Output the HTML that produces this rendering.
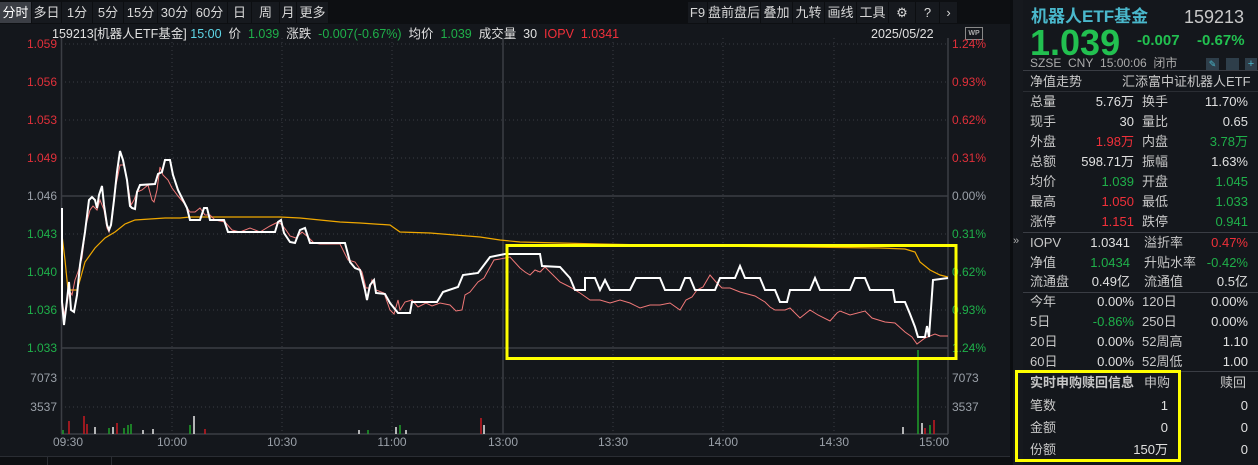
<!DOCTYPE html><html><head><meta charset="utf-8"><style>
*{margin:0;padding:0;box-sizing:border-box}
body{width:1258px;height:465px;background:#14171c;overflow:hidden;font-family:"Liberation Sans","Noto Sans CJK SC",sans-serif;color:#c8c8c8;position:relative;font-size:13px}
.a{position:absolute;white-space:nowrap}
.tb{position:absolute;top:2px;height:21px;line-height:21px;text-align:center;font-size:13px;white-space:nowrap;color:#d8d8d8;border-right:1px solid #0c0e11;background:#16191e}
.g{color:#1fb04a}.r{color:#f0303a}.w{color:#e0e0e0}.gr{color:#c8c8c8}
.rp .a{font-size:13px;line-height:18px;height:18px}
</style></head><body>
<div class="a" style="left:0;top:0;width:1010px;height:24px;background:#0d0f12"></div>
<div class="tb" style="left:0;width:32px;background:#3b3e45;color:#fff">分时</div>
<div class="tb" style="left:32px;width:30px">多日</div>
<div class="tb" style="left:62px;width:31px">1分</div>
<div class="tb" style="left:93px;width:31px">5分</div>
<div class="tb" style="left:124px;width:34px">15分</div>
<div class="tb" style="left:158px;width:34px">30分</div>
<div class="tb" style="left:192px;width:36px">60分</div>
<div class="tb" style="left:228px;width:24px">日</div>
<div class="tb" style="left:252px;width:28px">周</div>
<div class="tb" style="left:280px;width:17px">月</div>
<div class="tb" style="left:297px;width:32px">更多</div>
<div class="tb" style="left:688px;width:20px">F9</div>
<div class="tb" style="left:708px;width:53px">盘前盘后</div>
<div class="tb" style="left:761px;width:32px">叠加</div>
<div class="tb" style="left:793px;width:32px">九转</div>
<div class="tb" style="left:825px;width:32px">画线</div>
<div class="tb" style="left:857px;width:32px">工具</div>
<div class="tb" style="left:889px;width:27px">⚙</div>
<div class="tb" style="left:916px;width:24px">?</div>
<div class="tb" style="left:940px;width:18px">›</div>
<div class="a" style="left:52px;top:26px;font-size:12.5px;line-height:16px"><span class="w">159213[机器人ETF基金]</span> <span style="color:#5fd8e8">15:00</span>&nbsp; <span class="w">价</span>&nbsp; <span class="g">1.039</span>&nbsp; <span class="w">涨跌</span>&nbsp; <span class="g">-0.007(-0.67%)</span>&nbsp; <span class="w">均价</span>&nbsp; <span class="g">1.039</span>&nbsp; <span class="w">成交量</span>&nbsp; <span class="w">30</span>&nbsp; <span class="r">IOPV</span>&nbsp; <span class="r">1.0341</span></div>
<div class="a w" style="left:871px;top:26px;font-size:12.5px;line-height:16px">2025/05/22</div>
<div class="a" style="left:965px;top:27px;width:18px;height:13px;border:1px solid #888;font-size:7px;color:#aaa;text-align:center;line-height:11px;font-weight:bold">WP</div>
<svg class="a" style="left:0;top:0" width="1010" height="465">
<g stroke="#3a3d44" stroke-dasharray="1,3" stroke-width="1">
<line x1="61" x2="948" y1="44" y2="44"/><line x1="61" x2="948" y1="82" y2="82"/><line x1="61" x2="948" y1="120" y2="120"/><line x1="61" x2="948" y1="158" y2="158"/><line x1="61" x2="948" y1="234" y2="234"/><line x1="61" x2="948" y1="272" y2="272"/><line x1="61" x2="948" y1="310" y2="310"/><line x1="61" x2="948" y1="378" y2="378"/><line x1="61" x2="948" y1="407" y2="407"/>
<line x1="172" x2="172" y1="38" y2="434"/><line x1="282" x2="282" y1="38" y2="434"/><line x1="392" x2="392" y1="38" y2="434"/><line x1="613" x2="613" y1="38" y2="434"/><line x1="723" x2="723" y1="38" y2="434"/><line x1="834" x2="834" y1="38" y2="434"/>
</g>
<g stroke="#3b3e44" stroke-width="1.5"><line x1="61" x2="948" y1="196" y2="196"/><line x1="61" x2="948" y1="348" y2="348"/><line x1="61" x2="948" y1="434" y2="434"/>
<line x1="61.5" x2="61.5" y1="38" y2="434"/><line x1="503" x2="503" y1="38" y2="434"/><line x1="948" x2="948" y1="38" y2="434"/></g>
<g font-size="12" text-anchor="end">
<text x="57" y="48" fill="#e0303a">1.059</text><text x="57" y="86" fill="#e0303a">1.056</text><text x="57" y="124" fill="#e0303a">1.053</text><text x="57" y="162" fill="#e0303a">1.049</text><text x="57" y="200" fill="#9aa0a8">1.046</text><text x="57" y="238" fill="#1fb04a">1.043</text><text x="57" y="276" fill="#1fb04a">1.040</text><text x="57" y="314" fill="#1fb04a">1.036</text><text x="57" y="352" fill="#1fb04a">1.033</text><text x="57" y="382" fill="#9aa0a8">7073</text><text x="57" y="411" fill="#9aa0a8">3537</text>
</g>
<g font-size="12">
<text x="952" y="48" fill="#e0303a">1.24%</text><text x="952" y="86" fill="#e0303a">0.93%</text><text x="952" y="124" fill="#e0303a">0.62%</text><text x="952" y="162" fill="#e0303a">0.31%</text><text x="952" y="200" fill="#9aa0a8">0.00%</text><text x="952" y="238" fill="#1fb04a">0.31%</text><text x="952" y="276" fill="#1fb04a">0.62%</text><text x="952" y="314" fill="#1fb04a">0.93%</text><text x="952" y="352" fill="#1fb04a">1.24%</text><text x="952" y="382" fill="#9aa0a8">7073</text><text x="952" y="411" fill="#9aa0a8">3537</text>
</g>
<g font-size="12" fill="#9aa0a8" text-anchor="middle"><text x="68" y="446">09:30</text><text x="172" y="446">10:00</text><text x="282" y="446">10:30</text><text x="392" y="446">11:00</text><text x="503" y="446">13:00</text><text x="613" y="446">13:30</text><text x="723" y="446">14:00</text><text x="834" y="446">14:30</text><text x="934" y="446">15:00</text></g>
<g stroke-width="1.5">
<g stroke="#c81a22"><line x1="69" x2="69" y1="421" y2="434"/><line x1="84" x2="84" y1="416" y2="434"/><line x1="87" x2="87" y1="424" y2="434"/><line x1="117" x2="117" y1="423" y2="434"/><line x1="205" x2="205" y1="429" y2="434"/><line x1="481" x2="481" y1="418" y2="434"/><line x1="925" x2="925" y1="428" y2="434"/><line x1="934" x2="934" y1="420" y2="434"/></g>
<g stroke="#1fa02a"><line x1="63" x2="63" y1="430" y2="434"/><line x1="109" x2="109" y1="428" y2="434"/><line x1="124" x2="124" y1="428" y2="434"/><line x1="128" x2="128" y1="425" y2="434"/><line x1="131" x2="131" y1="424" y2="434"/><line x1="190" x2="190" y1="425" y2="434"/><line x1="400" x2="400" y1="425" y2="434"/><line x1="368" x2="368" y1="430" y2="434"/><line x1="918" x2="918" y1="350" y2="434"/><line x1="930" x2="930" y1="425" y2="434"/></g>
<g stroke="#e8e8e8"><line x1="95" x2="95" y1="427" y2="434"/><line x1="113" x2="113" y1="427" y2="434"/><line x1="143" x2="143" y1="430" y2="434"/><line x1="153" x2="153" y1="429" y2="434"/><line x1="194" x2="194" y1="416" y2="434"/><line x1="359" x2="359" y1="430" y2="434"/><line x1="396" x2="396" y1="427" y2="434"/><line x1="406" x2="406" y1="430" y2="434"/><line x1="484" x2="484" y1="425" y2="434"/><line x1="922" x2="922" y1="423" y2="434"/><line x1="903" x2="903" y1="427" y2="434"/></g>
</g>
<polyline fill="none" stroke="#f0a800" stroke-width="1.2" points="62,235 65,260 68,290 77,290 80,280 85,262 95,248 105,238 115,232 125,224 135,220 150,219 165,218 180,218 190,217 280,217 300,218 320,220 340,222 360,223 390,225 400,232 430,233 480,237 500,240 520,242 600,244 650,245 700,246 800,247 880,248 905,249 915,252 920,262 930,270 940,275 948,277"/>
<polyline fill="none" stroke="#f07878" stroke-width="1" points="62,300 65,318 67,305 69,290 72,295 75,280 78,272 82,258 86,225 90,210 93,206 97,210 100,200 104,210 107,228 109,232 112,220 116,185 120,165 124,165 128,185 131,205 134,200 137,192 142,190 148,185 152,200 154,202 157,190 160,167 163,175 168,180 172,188 178,196 184,203 190,212 195,212 200,208 205,215 210,215 215,220 225,222 232,230 240,232 250,228 260,232 270,226 278,222 282,225 286,230 290,236 296,238 302,232 308,237 314,243 320,244 340,244 348,260 355,262 362,272 366,288 370,288 372,280 376,290 384,293 390,310 394,314 398,300 400,310 405,302 412,300 418,307 426,303 432,306 440,303 450,305 456,311 462,310 465,295 470,292 478,282 484,278 494,260 500,259 510,257 520,268 525,272 530,275 535,270 540,272 545,267 550,272 560,282 570,287 580,293 590,300 600,300 610,303 620,300 630,303 640,308 650,305 660,305 670,303 680,310 686,300 692,297 697,290 703,287 710,275 716,282 722,288 730,288 740,292 755,296 765,302 770,307 775,310 785,310 790,308 800,318 810,310 818,315 830,321 837,313 840,311 850,315 865,311 872,318 885,322 895,323 905,332 912,337 917,344 925,338 935,334 940,336 948,336"/>
<polyline fill="none" stroke="#ffffff" stroke-width="2" points="62,208 62,302 64,325 67,300 69,282 71,310 74,312 77,295 80,265 85,232 89,200 92,197 95,200 97,208 99,195 102,186 104,205 107,225 109,230 111,225 114,200 117,172 120,151 123,160 127,180 130,206 132,208 135,209 137,192 140,185 155,184 158,174 162,172 165,160 170,160 173,175 178,190 187,208 190,220 200,220 204,208 207,208 210,220 224,220 228,232 275,232 278,222 281,220 284,233 290,242 295,243 300,230 305,228 310,243 345,243 350,262 355,268 360,270 365,290 367,300 370,285 374,280 376,293 385,294 390,303 398,313 410,313 412,302 437,302 443,292 458,287 463,275 478,273 490,257 505,254 540,254 542,266 560,267 570,278 575,290 585,290 585,278 595,278 600,290 605,280 610,290 630,290 636,278 660,278 665,290 680,290 685,278 690,278 695,290 715,290 720,278 735,278 740,266 745,278 760,278 765,290 775,290 780,302 787,302 790,290 810,290 815,278 820,290 850,290 855,278 865,278 870,290 893,290 895,302 905,302 910,314 915,327 918,337 925,337 927,326 929,337 933,280 948,278"/>
<rect x="507" y="245.5" width="449" height="113" fill="none" stroke="#ffff00" stroke-width="3"/>
</svg>
<div class="a" style="left:0;top:456px;width:1010px;height:9px;background:#0d0f12;border-top:1px solid #2a2d33"></div>
<div class="a" style="left:47px;top:456px;width:65px;height:9px;border-left:1px solid #2a2d33;border-right:1px solid #2a2d33"></div>
<div class="a" style="left:1010px;top:0;width:3px;height:465px;background:#0b0d10"></div>
<div class="a" style="left:1013px;top:0;width:10px;height:465px;background:#16191e"></div>
<div class="a" style="left:1013px;top:235px;width:10px;font-size:11px;color:#aaa">»</div>
<div class="a" style="left:1031px;top:6px;font-size:17px;line-height:22px;font-weight:bold;color:#4ab8cc">机器人ETF基金</div>
<div class="a" style="left:1184px;top:6px;font-size:18px;line-height:22px;color:#c8c8c8">159213</div>
<div class="a" style="left:1030px;top:24px;font-size:36px;line-height:38px;font-weight:bold;color:#22c050">1.039</div>
<div class="a" style="left:1137px;top:32px;font-size:15px;line-height:18px;font-weight:bold;color:#22c050">-0.007</div>
<div class="a" style="left:1197px;top:32px;font-size:15px;line-height:18px;font-weight:bold;color:#22c050">-0.67%</div>
<div class="a" style="left:1030px;top:55px;font-size:12px;line-height:16px;color:#aaa">SZSE&nbsp; CNY&nbsp; 15:00:06&nbsp; 闭市</div>
<div class="a" style="left:1206px;top:58px;width:13px;height:12px;background:#2e3e4a;font-size:9px;color:#4ab8cc;text-align:center;line-height:12px">✎</div>
<div class="a" style="left:1226px;top:58px;width:13px;height:12px;background:#2e3e4a"></div>
<div class="a" style="left:1245px;top:58px;width:12px;height:12px;background:#2e3e4a;font-size:11px;color:#4ab8cc;text-align:center;line-height:12px">+</div>
<div class="a" style="left:1023px;top:70px;width:235px;height:1px;background:#3a3d44"></div>
<div class="a" style="left:1023px;top:91px;width:235px;height:1px;background:#2a2d33"></div>
<div class="rp">
<div class="a gr" style="left:1030px;top:73px">净值走势</div>
<div class="a gr" style="left:1122px;top:73px;width:126px;text-align:right">汇添富中证机器人ETF</div>
<div class="a gr" style="left:1030px;top:93px">总量</div><div class="a w" style="left:1070px;top:93px;width:64px;text-align:right">5.76万</div><div class="a gr" style="left:1142px;top:93px">换手</div><div class="a w" style="left:1180px;top:93px;width:68px;text-align:right">11.70%</div>
<div class="a gr" style="left:1030px;top:113px">现手</div><div class="a w" style="left:1070px;top:113px;width:64px;text-align:right">30</div><div class="a gr" style="left:1142px;top:113px">量比</div><div class="a w" style="left:1180px;top:113px;width:68px;text-align:right">0.65</div>
<div class="a gr" style="left:1030px;top:133px">外盘</div><div class="a r" style="left:1070px;top:133px;width:64px;text-align:right">1.98万</div><div class="a gr" style="left:1142px;top:133px">内盘</div><div class="a g" style="left:1180px;top:133px;width:68px;text-align:right">3.78万</div>
<div class="a gr" style="left:1030px;top:153px">总额</div><div class="a w" style="left:1060px;top:153px;width:74px;text-align:right">598.71万</div><div class="a gr" style="left:1142px;top:153px">振幅</div><div class="a w" style="left:1180px;top:153px;width:68px;text-align:right">1.63%</div>
<div class="a gr" style="left:1030px;top:173px">均价</div><div class="a g" style="left:1070px;top:173px;width:64px;text-align:right">1.039</div><div class="a gr" style="left:1142px;top:173px">开盘</div><div class="a g" style="left:1180px;top:173px;width:68px;text-align:right">1.045</div>
<div class="a gr" style="left:1030px;top:193px">最高</div><div class="a r" style="left:1070px;top:193px;width:64px;text-align:right">1.050</div><div class="a gr" style="left:1142px;top:193px">最低</div><div class="a g" style="left:1180px;top:193px;width:68px;text-align:right">1.033</div>
<div class="a gr" style="left:1030px;top:213px">涨停</div><div class="a r" style="left:1070px;top:213px;width:64px;text-align:right">1.151</div><div class="a gr" style="left:1142px;top:213px">跌停</div><div class="a g" style="left:1180px;top:213px;width:68px;text-align:right">0.941</div>
<div class="a" style="left:1023px;top:232px;width:235px;height:1px;background:#3a3d44"></div>
<div class="a gr" style="left:1030px;top:234px">IOPV</div><div class="a w" style="left:1070px;top:234px;width:60px;text-align:right">1.0341</div><div class="a gr" style="left:1144px;top:234px">溢折率</div><div class="a r" style="left:1180px;top:234px;width:68px;text-align:right">0.47%</div>
<div class="a gr" style="left:1030px;top:254px">净值</div><div class="a g" style="left:1070px;top:254px;width:60px;text-align:right">1.0434</div><div class="a gr" style="left:1144px;top:254px">升贴水率</div><div class="a g" style="left:1180px;top:254px;width:68px;text-align:right">-0.42%</div>
<div class="a gr" style="left:1030px;top:273px">流通盘</div><div class="a w" style="left:1070px;top:273px;width:60px;text-align:right">0.49亿</div><div class="a gr" style="left:1144px;top:273px">流通值</div><div class="a w" style="left:1180px;top:273px;width:68px;text-align:right">0.5亿</div>
<div class="a" style="left:1023px;top:292px;width:235px;height:1px;background:#3a3d44"></div>
<div class="a gr" style="left:1030px;top:293px">今年</div><div class="a w" style="left:1070px;top:293px;width:64px;text-align:right">0.00%</div><div class="a gr" style="left:1142px;top:293px">120日</div><div class="a w" style="left:1180px;top:293px;width:68px;text-align:right">0.00%</div>
<div class="a gr" style="left:1030px;top:313px">5日</div><div class="a g" style="left:1070px;top:313px;width:64px;text-align:right">-0.86%</div><div class="a gr" style="left:1142px;top:313px">250日</div><div class="a w" style="left:1180px;top:313px;width:68px;text-align:right">0.00%</div>
<div class="a gr" style="left:1030px;top:333px">20日</div><div class="a w" style="left:1070px;top:333px;width:64px;text-align:right">0.00%</div><div class="a gr" style="left:1142px;top:333px">52周高</div><div class="a w" style="left:1180px;top:333px;width:68px;text-align:right">1.10</div>
<div class="a gr" style="left:1030px;top:353px">60日</div><div class="a w" style="left:1070px;top:353px;width:64px;text-align:right">0.00%</div><div class="a gr" style="left:1142px;top:353px">52周低</div><div class="a w" style="left:1180px;top:353px;width:68px;text-align:right">1.00</div>
<div class="a" style="left:1023px;top:371px;width:235px;height:1px;background:#3a3d44"></div>
<div class="a gr" style="left:1030px;top:374px;font-weight:bold">实时申购赎回信息</div><div class="a gr" style="left:1144px;top:374px">申购</div><div class="a gr" style="left:1220px;top:374px">赎回</div>
<div class="a gr" style="left:1030px;top:397px">笔数</div><div class="a w" style="left:1120px;top:397px;width:48px;text-align:right">1</div><div class="a w" style="left:1200px;top:397px;width:48px;text-align:right">0</div>
<div class="a gr" style="left:1030px;top:419px">金额</div><div class="a w" style="left:1120px;top:419px;width:48px;text-align:right">0</div><div class="a w" style="left:1200px;top:419px;width:48px;text-align:right">0</div>
<div class="a gr" style="left:1030px;top:441px">份额</div><div class="a w" style="left:1110px;top:441px;width:58px;text-align:right">150万</div><div class="a w" style="left:1200px;top:441px;width:48px;text-align:right">0</div>
</div>
<div class="a" style="left:1015px;top:370px;width:166px;height:92px;border:3px solid #ffff00"></div>
</body></html>
